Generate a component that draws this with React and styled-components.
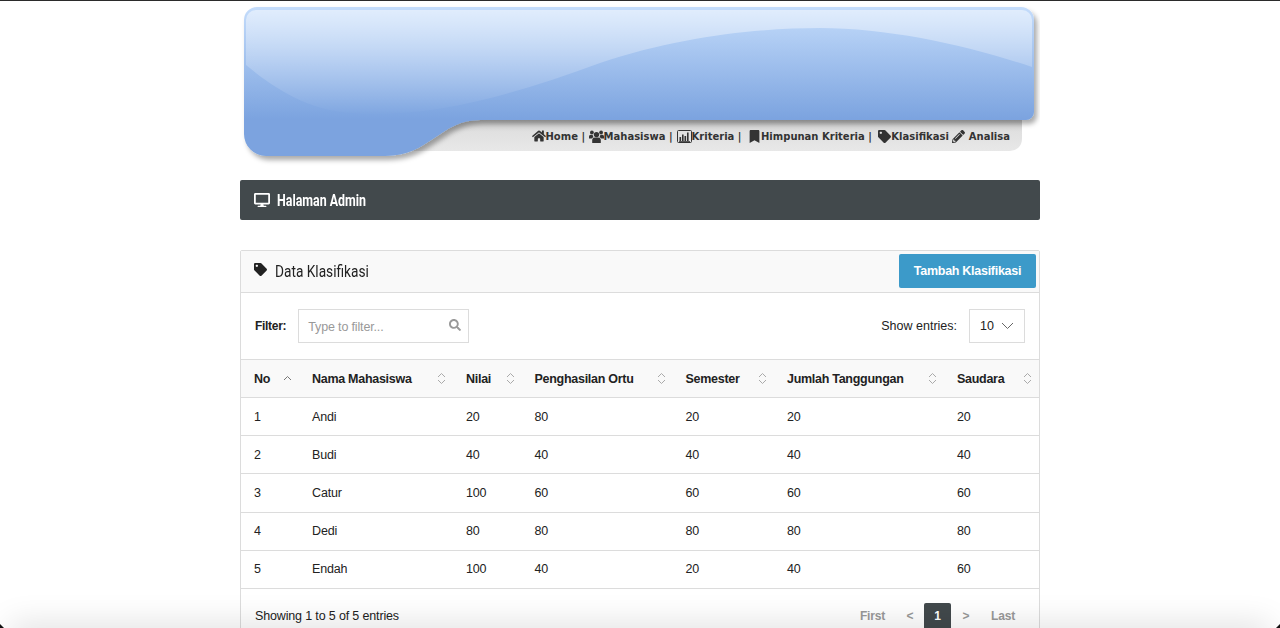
import styled, { createGlobalStyle } from "styled-components";
import {
  FaHome,
  FaBookmark,
  FaTag,
  FaPencilAlt,
  FaDesktop,
  FaSearch,
} from "react-icons/fa";

const GlobalStyle = createGlobalStyle`
  html, body {
    margin: 0;
    padding: 0;
    height: 628px;
    overflow: hidden;
    background: #fff;
    font-family: "Liberation Sans", Arial, sans-serif;
    font-size: 12.5px;
    color: #222;
  }
`;

const Page = styled.div`
  border-top: 1px solid #2b2b2b;
  width: 100%;
`;

const Wrapper = styled.div`
  width: 800px;
  margin: 0 auto;
`;

const Header = styled.header`
  position: relative;
  height: 179px;
  display: flex;
  justify-content: flex-end;
  align-items: flex-start;
`;

const Banner = styled.svg`
  position: absolute;
  left: 0;
  top: 0;
  width: 800px;
  height: 179px;
`;

const Nav = styled.nav`
  position: relative;
  margin-top: 127px;
  margin-right: 30px;
  display: flex;
  align-items: center;
  height: 16px;
  font-family: "DejaVu Sans", Verdana, sans-serif;
  font-size: 10px;
  font-weight: 700;
  color: #333;
  white-space: pre;
`;

const NavIcon = styled.span`
  display: inline-flex;
  font-size: ${(props) => props.$size || 13}px;
  margin-left: ${(props) => props.$ml || 0}px;
  color: #333;
`;

const PageTitle = styled.div`
  height: 40px;
  background: #42494c;
  border-radius: 2px;
  display: flex;
  align-items: center;
  padding-left: 14px;
  gap: 7px;
  color: #fff;

  svg {
    font-size: 16px;
  }
`;

const NarrowText = styled.span`
  display: inline-block;
  font-family: Roboto, "Liberation Sans", sans-serif;
  font-size: ${(props) => props.$size}px;
  font-weight: ${(props) => props.$weight};
  transform: scaleX(${(props) => props.$scale});
  transform-origin: left center;
  white-space: nowrap;
`;

const Card = styled.section`
  margin-top: 30px;
  border: 1px solid #dcdcdc;
  border-radius: 2px;
`;

const CardHeader = styled.div`
  height: 41px;
  background: #f9f9f9;
  border-bottom: 1px solid #dcdcdc;
  display: flex;
  align-items: center;
  justify-content: space-between;
  padding: 0 3px 0 13px;
`;

const CardTitle = styled.h3`
  margin: 0;
  display: flex;
  align-items: center;
  gap: 8px;
  font-size: 16px;
  font-weight: 400;
  color: #222;

  svg {
    font-size: 13px;
    margin-top: -4px;
  }
`;

const AddButton = styled.button`
  width: 137px;
  height: 34px;
  margin-top: -1px;
  border: 0;
  border-radius: 2px;
  background: #3c9ac9;
  color: #fff;
  font-family: "Liberation Sans", Arial, sans-serif;
  font-size: 12.5px;
  font-weight: 700;
  letter-spacing: -0.28px;
`;

const FilterBar = styled.div`
  height: 66px;
  display: flex;
  align-items: center;
  justify-content: space-between;
  padding: 0 14px;
`;

const FilterGroup = styled.label`
  display: flex;
  align-items: center;
  gap: 12px;
  color: #222;
`;

const FilterLabel = styled.span`
  font-weight: ${(props) => (props.$bold ? 700 : 400)};
  font-size: ${(props) => (props.$bold ? 12 : 12.5)}px;
  letter-spacing: ${(props) => (props.$bold ? -0.3 : 0)}px;
`;

const FilterInput = styled.div`
  width: 171px;
  height: 34px;
  box-sizing: border-box;
  border: 1px solid #dcdcdc;
  display: flex;
  align-items: center;
  justify-content: space-between;
  padding: 2px 7px 0 9px;
  color: #999;
  letter-spacing: -0.15px;

  svg {
    font-size: 12px;
    color: #999;
    margin-top: -4px;
  }
`;

const EntriesSelect = styled.div`
  width: 56px;
  height: 34px;
  box-sizing: border-box;
  border: 1px solid #dcdcdc;
  display: flex;
  align-items: center;
  justify-content: space-between;
  padding: 0 10px;
  color: #222;
`;

const Table = styled.table`
  width: 798px;
  table-layout: fixed;
  border-collapse: collapse;
`;

const Th = styled.th`
  height: 38px;
  padding: 0 7px 0 13px;
  box-sizing: border-box;
  background: #f9f9f9;
  border-top: 1px solid #dcdcdc;
  border-bottom: 1px solid #dcdcdc;
  font-size: 12.5px;
  font-weight: 700;
  letter-spacing: -0.28px;
  text-align: left;
  color: #222;
`;

const ThInner = styled.div`
  display: flex;
  align-items: center;
  justify-content: space-between;
`;

const Td = styled.td`
  height: 38.2px;
  padding: 0 13px;
  box-sizing: border-box;
  border-bottom: 1px solid #dcdcdc;
  letter-spacing: -0.15px;
  color: #222;
`;

const CardFooter = styled.div`
  height: 52px;
  display: flex;
  justify-content: space-between;
  padding: 14px 14px 0;
`;

const Showing = styled.div`
  line-height: 27px;
  letter-spacing: -0.15px;
`;

const Pager = styled.div`
  display: flex;
  align-items: flex-start;
  font-size: 12px;
  font-weight: 700;
  letter-spacing: -0.2px;
  line-height: 27px;
`;

const PageLink = styled.span`
  width: ${(props) => props.$w}px;
  height: 27px;
  text-align: center;
  border-radius: 2px;
  background: ${(props) => (props.$active ? "#42494c" : "transparent")};
  color: ${(props) => (props.$active ? "#fff" : "#999")};
`;

const Vignette = styled.div`
  position: fixed;
  left: 14px;
  right: 14px;
  bottom: -20px;
  height: 20px;
  box-shadow: 0 0 32px 4px rgba(0, 0, 0, 0.13);
  pointer-events: none;
`;

const WindowCorner = styled.div`
  position: fixed;
  bottom: 0;
  ${(props) => props.$side}: 0;
  width: 4px;
  height: 4px;
  background: #111;
  clip-path: ${(props) =>
    props.$side === "left"
      ? "polygon(0 0, 100% 100%, 0 100%)"
      : "polygon(100% 0, 100% 100%, 0 100%)"};
`;

function SortIcon({ up }) {
  return (
    <svg width="9" height="13" viewBox="0 0 9 13" fill="none" stroke="#aaa" strokeWidth="1">
      {up ? (
        <path d="M1 8l3.5-3.5L8 8" stroke="#777" />
      ) : (
        <>
          <path d="M1 5l3.5-3.5L8 5" />
          <path d="M1 8l3.5 3.5L8 8" />
        </>
      )}
    </svg>
  );
}

// the old font-awesome users glyph, three people with a bigger one in front
function UsersIcon() {
  return (
    <svg width="15" height="13" viewBox="0 0 15 13" fill="#333">
      <circle cx="7.5" cy="4.6" r="2.7" />
      <circle cx="2.9" cy="2.4" r="1.9" />
      <circle cx="12.1" cy="2.4" r="1.9" />
      <path d="M3.2 13V10.2a2.8 2.8 0 0 1 2.8-2.8h3a2.8 2.8 0 0 1 2.8 2.8V13Z" />
      <path d="M0 8.6V6.4a1.7 1.7 0 0 1 1.7-1.7h2a3.6 3.6 0 0 0 .9 2.5 3.6 3.6 0 0 0-2 1.4Z" />
      <path d="M15 8.6V6.4a1.7 1.7 0 0 0-1.7-1.7h-2a3.6 3.6 0 0 1-.9 2.5 3.6 3.6 0 0 1 2 1.4Z" />
    </svg>
  );
}

function ChartIcon() {
  return (
    <svg width="15" height="13" viewBox="0 0 15 13" fill="#333">
      <rect x="0.5" y="0.5" width="14" height="12" rx="1" fill="none" stroke="#333" />
      <rect x="2.5" y="7" width="1.6" height="4" />
      <rect x="5" y="4.5" width="1.6" height="6.5" />
      <rect x="7.5" y="6" width="1.6" height="5" />
      <rect x="10" y="2.5" width="1.6" height="8.5" />
      <rect x="2" y="11" width="11" height="0.8" />
    </svg>
  );
}

const columns = [
  { name: "No", width: 58, up: true },
  { name: "Nama Mahasiswa", width: 154 },
  { name: "Nilai", width: 68.5 },
  { name: "Penghasilan Ortu", width: 151 },
  { name: "Semester", width: 101.5 },
  { name: "Jumlah Tanggungan", width: 170 },
  { name: "Saudara", width: 95 },
];

const rows = [
  [1, "Andi", 20, 80, 20, 20, 20],
  [2, "Budi", 40, 40, 40, 40, 40],
  [3, "Catur", 100, 60, 60, 60, 60],
  [4, "Dedi", 80, 80, 80, 80, 80],
  [5, "Endah", 100, 40, 20, 40, 60],
];

export default function App() {
  return (
    <Page>
      <GlobalStyle />
      <Wrapper>
        <Header>
          <Banner viewBox="0 0 800 179">
            <defs>
              <linearGradient id="sky" gradientUnits="userSpaceOnUse" x1="0" y1="6" x2="0" y2="119">
                <stop offset="0" stopColor="#c4dcfb" />
                <stop offset="1" stopColor="#7ba3df" />
              </linearGradient>
              <linearGradient id="gloss" gradientUnits="userSpaceOnUse" x1="0" y1="8" x2="0" y2="115">
                <stop offset="0" stopColor="#fff" stopOpacity="0.5" />
                <stop offset="0.55" stopColor="#fff" stopOpacity="0.2" />
                <stop offset="1" stopColor="#fff" stopOpacity="0" />
              </linearGradient>
              <linearGradient id="tab" x1="0" y1="0" x2="0" y2="1">
                <stop offset="0" stopColor="#c8c8c8" />
                <stop offset="0.4" stopColor="#e0e0e0" />
                <stop offset="1" stopColor="#e8e8e8" />
              </linearGradient>
              <filter id="shade" x="-5%" y="-5%" width="110%" height="120%">
                <feDropShadow dx="3" dy="4" stdDeviation="2.5" floodColor="#000" floodOpacity="0.33" />
              </filter>
            </defs>
            <path d="M150 118H782V138a12 12 0 0 1-12 12H150Z" fill="url(#tab)" />
            <path
              d="M4 19a13 13 0 0 1 13-13H781a13 13 0 0 1 13 13V111a8 8 0 0 1-8 8H240C200 119 190 155 145 155H26a22 22 0 0 1-22-22Z"
              fill="url(#sky)"
              filter="url(#shade)"
            />
            <path
              d="M6 64C40 92 70 108 110 112C190 118 270 95 360 62C440 35 520 27 580 27C650 27 730 45 792 66V19a10 10 0 0 0-10-10H16A10 10 0 0 0 6 19Z"
              fill="url(#gloss)"
            />
          </Banner>
          <Nav>
            <NavIcon $size={14}><FaHome /></NavIcon>Home | <NavIcon><UsersIcon /></NavIcon>Mahasiswa |<NavIcon $ml={4}><ChartIcon /></NavIcon>Kriteria | <NavIcon $ml={3}><FaBookmark /></NavIcon>Himpunan Kriteria | <NavIcon $ml={3}><FaTag /></NavIcon>Klasifikasi <NavIcon><FaPencilAlt /></NavIcon> Analisa
          </Nav>
        </Header>

        <PageTitle>
          <FaDesktop />
          <NarrowText $size={16} $weight={700} $scale={0.775}>Halaman Admin</NarrowText>
        </PageTitle>

        <Card>
          <CardHeader>
            <CardTitle>
              <FaTag />
              <NarrowText $size={16} $weight={400} $scale={0.855}>Data Klasifikasi</NarrowText>
            </CardTitle>
            <AddButton>Tambah Klasifikasi</AddButton>
          </CardHeader>

          <FilterBar>
            <FilterGroup>
              <FilterLabel $bold>Filter:</FilterLabel>
              <FilterInput>
                Type to filter...
                <FaSearch />
              </FilterInput>
            </FilterGroup>
            <FilterGroup>
              <FilterLabel>Show entries:</FilterLabel>
              <EntriesSelect>
                10
                <svg width="13" height="8" viewBox="0 0 13 8" fill="none" stroke="#666" strokeWidth="1">
                  <path d="M1 1l5.5 5.5L12 1" />
                </svg>
              </EntriesSelect>
            </FilterGroup>
          </FilterBar>

          <Table>
            <colgroup>
              {columns.map((col) => (
                <col key={col.name} width={col.width} />
              ))}
            </colgroup>
            <thead>
              <tr>
                {columns.map((col) => (
                  <Th key={col.name}>
                    <ThInner>
                      {col.name}
                      <SortIcon up={col.up} />
                    </ThInner>
                  </Th>
                ))}
              </tr>
            </thead>
            <tbody>
              {rows.map((row) => (
                <tr key={row[0]}>
                  {row.map((value, i) => (
                    <Td key={i}>{value}</Td>
                  ))}
                </tr>
              ))}
            </tbody>
          </Table>

          <CardFooter>
            <Showing>Showing 1 to 5 of 5 entries</Showing>
            <Pager>
              <PageLink $w={47}>First</PageLink>
              <PageLink $w={28}>&lt;</PageLink>
              <PageLink $w={27} $active>1</PageLink>
              <PageLink $w={30}>&gt;</PageLink>
              <PageLink $w={44}>Last</PageLink>
            </Pager>
          </CardFooter>
        </Card>
      </Wrapper>
      <Vignette />
      <WindowCorner $side="left" />
      <WindowCorner $side="right" />
    </Page>
  );
}
